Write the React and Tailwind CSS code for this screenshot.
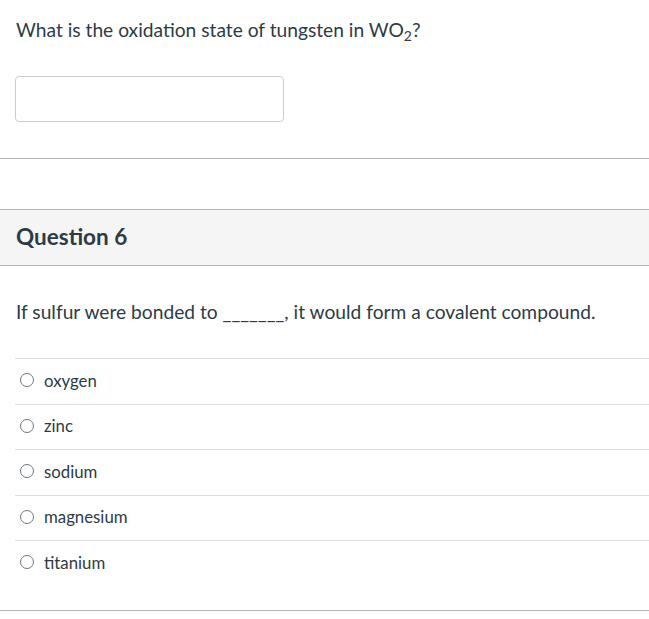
export default function App() {
    const answers = ['oxygen', 'zinc', 'sodium', 'magnesium', 'titanium']
    return (
        <div className="w-[649px] h-[619px] bg-white text-[#2d3b45] font-['Lato','Liberation_Sans',sans-serif] overflow-hidden">
            <div className="px-4 pt-[17px]">
                <p className="text-[19.2px] leading-[26px]">
                    What is the oxidation state of tungsten in WO<sub className="text-[14px]">2</sub>?
                </p>
                <div className="mt-[33px] w-[269px] h-[46px] rounded-[4px] border border-[#c7cdd1] -ml-px" />
            </div>
            <div className="mt-[36px] border-t border-[#b5b5b5]" />
            <div className="mt-[50px] border-y border-[#b5b5b5] bg-[#f5f5f5] h-[57px] flex items-center px-4 pb-[2px]">
                <h2 className="text-[22.5px] font-bold">Question 6</h2>
            </div>
            <div className="px-4 pt-[33px]">
                <p className="text-[19.2px] leading-[26px]">
                    If sulfur were bonded to _______, it would form a covalent compound.
                </p>
            </div>
            <div className="ml-[15px] mt-[33px]">
                {answers.map((a) => (
                    <div key={a} className="border-t border-[#dcdfe2] h-[45.5px] flex items-center gap-[10px] pl-[5px] pb-[2px]">
                        <span className="w-[14px] h-[14px] rounded-full border border-[#6b7780]" />
                        <span className="text-[16.8px]">{a}</span>
                    </div>
                ))}
            </div>
            <div className="mt-[24px] border-t border-[#b5b5b5]" />
        </div>
    )
}
